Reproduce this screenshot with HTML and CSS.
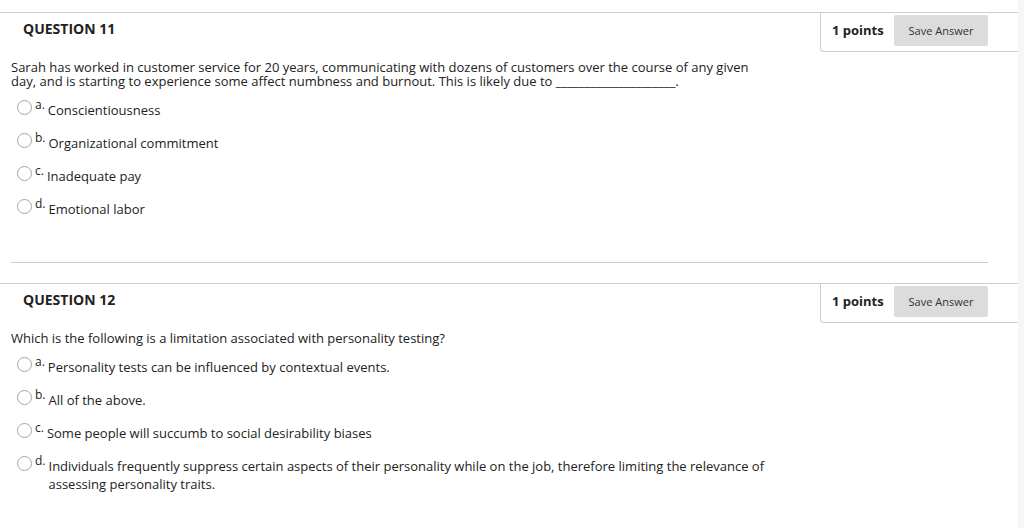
FILE: index.html
```html
<!DOCTYPE html>
<html>
<head>
<meta charset="utf-8">
<link rel="stylesheet" href="styles.css">
</head>
<body>
<div class="page">
  <section class="question">
    <div class="q-head">
      <h3 class="q-title">QUESTION 11</h3>
      <div class="points">
        <span class="pts">1 points</span>
        <button class="save">Save Answer</button>
      </div>
    </div>
    <div class="q-body">
      <p class="q-text">Sarah has worked in customer service for 20 years, communicating with dozens of customers over the course of any given day, and is starting to experience some affect numbness and burnout. This is likely due to _____________________.</p>
      <ul class="opts">
        <li class="opt"><span class="radio"></span><span class="lbl">a.</span><span class="otext">Conscientiousness</span></li>
        <li class="opt"><span class="radio"></span><span class="lbl">b.</span><span class="otext">Organizational commitment</span></li>
        <li class="opt"><span class="radio"></span><span class="lbl">c.</span><span class="otext">Inadequate pay</span></li>
        <li class="opt"><span class="radio"></span><span class="lbl">d.</span><span class="otext">Emotional labor</span></li>
      </ul>
    </div>
    <hr class="sep">
  </section>
  <section class="question">
    <div class="q-head">
      <h3 class="q-title">QUESTION 12</h3>
      <div class="points">
        <span class="pts">1 points</span>
        <button class="save">Save Answer</button>
      </div>
    </div>
    <div class="q-body">
      <p class="q-text">Which is the following is a limitation associated with personality testing?</p>
      <ul class="opts">
        <li class="opt"><span class="radio"></span><span class="lbl">a.</span><span class="otext">Personality tests can be influenced by contextual events.</span></li>
        <li class="opt"><span class="radio"></span><span class="lbl">b.</span><span class="otext">All of the above.</span></li>
        <li class="opt"><span class="radio"></span><span class="lbl">c.</span><span class="otext">Some people will succumb to social desirability biases</span></li>
        <li class="opt"><span class="radio"></span><span class="lbl">d.</span><span class="otext">Individuals frequently suppress certain aspects of their personality while on the job, therefore limiting the relevance of assessing personality traits.</span></li>
      </ul>
    </div>
  </section>
</div>
</body>
</html>
```

FILE: styles.css
```css
html, body {
  margin: 0;
  padding: 0;
}
body {
  background: #f6f6f6;
  font-family: "Open Sans", "Liberation Sans", sans-serif;
  color: #222;
  font-size: 13px;
  height: 528px;
  overflow: hidden;
}
.page {
  width: 1018px;
  background: #fff;
  padding-top: 12px;
  min-height: 516px;
}
.question {
  border-top: 1px solid #cdcdcd;
}
.q-head {
  display: flex;
  align-items: flex-start;
}
.q-title {
  margin: 0;
  padding: 7px 0 0 23px;
  font-size: 14px;
  font-weight: 700;
  color: #222;
  line-height: 18px;
  flex: 1;
}
.points {
  width: 198px;
  box-sizing: border-box;
  border-left: 1px solid #cdcdcd;
  border-bottom: 1px solid #cdcdcd;
  border-bottom-left-radius: 4px;
  padding: 2px 30px 5px 11px;
  display: flex;
  align-items: center;
  justify-content: space-between;
}
.pts {
  font-weight: 700;
  font-size: 13px;
  color: #222;
  position: relative;
  top: -1px;
}
.save {
  width: 94px;
  height: 31px;
  border: 0;
  border-radius: 2px;
  background: #dcdcdc;
  font-family: "Open Sans", "Liberation Sans", sans-serif;
  font-size: 11px;
  color: #333;
  padding: 0;
}
.q-body {
  padding: 8px 0 0 11px;
  width: 762px;
}
.q-text {
  margin: 0 0 11px;
  line-height: 14px;
}
.opts {
  list-style: none;
  margin: 0;
  padding: 0 0 0 6px;
}
.opt {
  display: flex;
  align-items: flex-start;
  min-height: 33px;
  line-height: 18px;
}
.radio {
  flex: none;
  width: 13px;
  height: 13px;
  border: 1px solid #a5a5a5;
  border-radius: 50%;
  margin-top: 1px;
  margin-right: 3px;
}
.lbl {
  flex: none;
  font-size: 12px;
  line-height: 12px;
  margin-right: 3px;
  margin-top: 0;
}
.otext {
  padding-top: 2px;
}
.sep {
  border: 0;
  border-top: 1px solid #cdcdcd;
  margin: 31px 30px 20px 11px;
}
```
